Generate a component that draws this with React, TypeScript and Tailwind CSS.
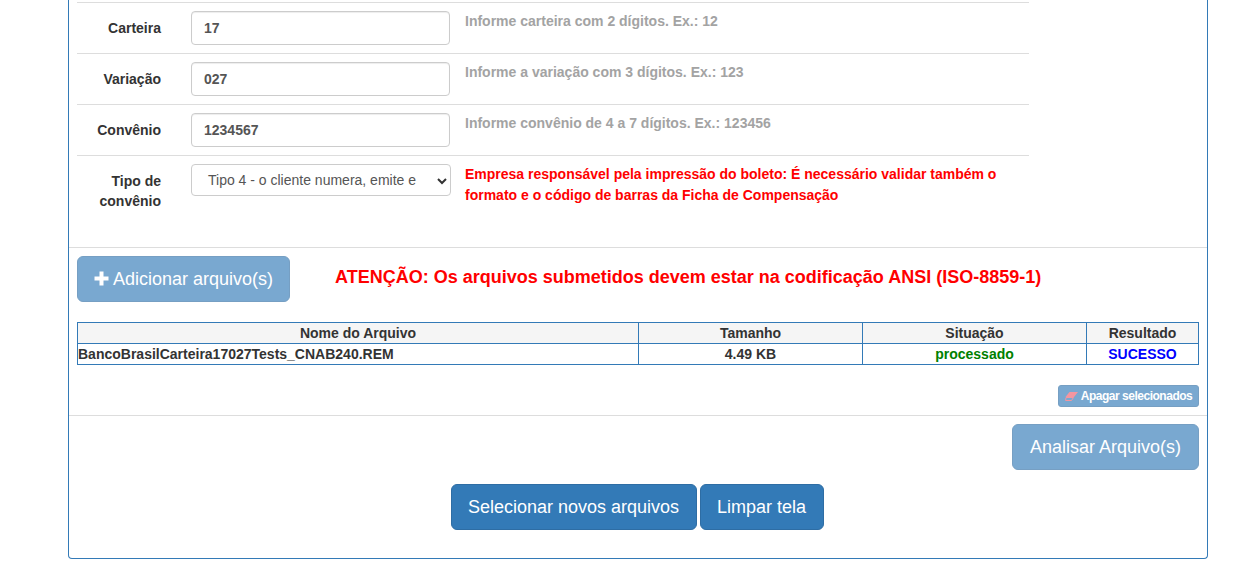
const inputRows = [
  { label: "Carteira", value: "17", hint: "Informe carteira com 2 dígitos. Ex.: 12" },
  { label: "Variação", value: "027", hint: "Informe a variação com 3 dígitos. Ex.: 123" },
  { label: "Convênio", value: "1234567", hint: "Informe convênio de 4 a 7 dígitos. Ex.: 123456" },
];

const PlusIcon = () => (
  <svg width="15" height="15" viewBox="0 0 15 15" fill="#fff" className="mr-[4px] inline-block align-[-1px]">
    <path d="M5.5 0.5h4v5h5v4h-5v5h-4v-5h-5v-4h5z" />
  </svg>
);

const EraserIcon = () => (
  <svg width="13" height="9" viewBox="0 0 13 9" className="mr-[3px] inline-block">
    <path d="M4.5 0H13L9 5H0.5z" fill="#ef5f6e" />
    <path d="M1 5.5h7.5L6.5 8.5H0.6z" fill="none" stroke="#ef5f6e" strokeWidth="1" />
  </svg>
);

export default function App() {
  return (
    <div className="h-[586px] overflow-hidden bg-white font-['Liberation_Sans',Arial,sans-serif] text-[14px] text-[#333]">
      <div className="ml-[68px] w-[1140px] rounded-b border-x border-b border-[#337ab7] pb-[28px] pt-[2px]">
        <div className="px-2">
          <div className="w-[952px]">
            {inputRows.map((row) => (
              <div key={row.label} className="flex h-[51px] items-start border-t border-[#ddd] pt-2">
                <label className="flex h-[34px] w-[84px] items-center justify-end font-bold">{row.label}</label>
                <div className="ml-[30px] flex h-[34px] w-[259px] items-center rounded border border-[#ccc] px-3 font-bold text-[#555] shadow-[inset_0_1px_1px_rgba(0,0,0,0.075)]">
                  {row.value}
                </div>
                <p className="ml-[15px] font-bold leading-5 text-[#a3a3a3]">{row.hint}</p>
              </div>
            ))}
            <div className="flex h-[92px] items-start border-t border-[#ddd] pt-2">
              <label className="mt-[7px] w-[84px] text-right font-bold leading-5">
                Tipo de
                <br />
                convênio
              </label>
              <div className="relative ml-[30px] flex h-[32px] w-[260px] items-center rounded border border-[#ccc] pl-4 text-[#555]">
                Tipo 4 - o cliente numera, emite e
                <svg width="10" height="7" viewBox="0 0 10 7" className="absolute right-[3px] top-[13px]" fill="none" stroke="#333" strokeWidth="2">
                  <path d="M1 1l4 4 4-4" />
                </svg>
              </div>
              <p className="ml-[14px] w-[550px] font-bold leading-[21px] text-[#f00]">
                Empresa responsável pela impressão do boleto: É necessário validar também o formato e o código de barras da Ficha de Compensação
              </p>
            </div>
          </div>
        </div>

        <div className="border-t border-[#ddd] px-2 pt-2">
          <div className="flex items-center">
            <button className="h-[46px] w-[213px] rounded-md border border-[#2e6da4] bg-[#337ab7] text-[18px] text-white opacity-65">
              <PlusIcon />
              Adicionar arquivo(s)
            </button>
            <span className="mb-[4px] ml-[45px] text-[18px] font-bold text-[#f00]">
              ATENÇÃO: Os arquivos submetidos devem estar na codificação ANSI (ISO-8859-1)
            </span>
          </div>

          <table className="mt-5 w-[1122px] table-fixed border-collapse font-bold leading-5">
            <thead>
              <tr className="bg-[#f5f5f5]">
                <th className="w-[561px] border border-[#337ab7] p-0 font-bold">Nome do Arquivo</th>
                <th className="w-[224px] border border-[#337ab7] p-0 font-bold">Tamanho</th>
                <th className="w-[224px] border border-[#337ab7] p-0 font-bold">Situação</th>
                <th className="border border-[#337ab7] p-0 font-bold">Resultado</th>
              </tr>
            </thead>
            <tbody>
              <tr>
                <td className="border border-[#337ab7] p-0">BancoBrasilCarteira17027Tests_CNAB240.REM</td>
                <td className="border border-[#337ab7] p-0 text-center">4.49 KB</td>
                <td className="border border-[#337ab7] p-0 text-center text-[#008000]">processado</td>
                <td className="border border-[#337ab7] p-0 text-center text-[#00f]">SUCESSO</td>
              </tr>
            </tbody>
          </table>

          <div className="mt-5 flex justify-end">
            <button className="flex h-[22px] w-[141px] items-center justify-center rounded-[3px] border border-[#2e6da4] bg-[#337ab7] text-[12px] font-bold tracking-[-0.48px] text-white opacity-65">
              <EraserIcon />
              Apagar selecionados
            </button>
          </div>
        </div>

        <div className="mt-2 border-t border-[#ddd] px-2 pt-2">
          <div className="flex justify-end">
            <button className="h-[46px] w-[187px] rounded-md border border-[#2e6da4] bg-[#337ab7] text-[18px] text-white opacity-65">
              Analisar Arquivo(s)
            </button>
          </div>
          <div className="mt-[14px] flex justify-center gap-[3px] pr-[2px]">
            <button className="h-[46px] w-[246px] rounded-md border border-[#2e6da4] bg-[#337ab7] text-[18px] text-white">
              Selecionar novos arquivos
            </button>
            <button className="h-[46px] w-[124px] rounded-md border border-[#2e6da4] bg-[#337ab7] text-[18px] text-white">
              Limpar tela
            </button>
          </div>
        </div>
      </div>
    </div>
  );
}
